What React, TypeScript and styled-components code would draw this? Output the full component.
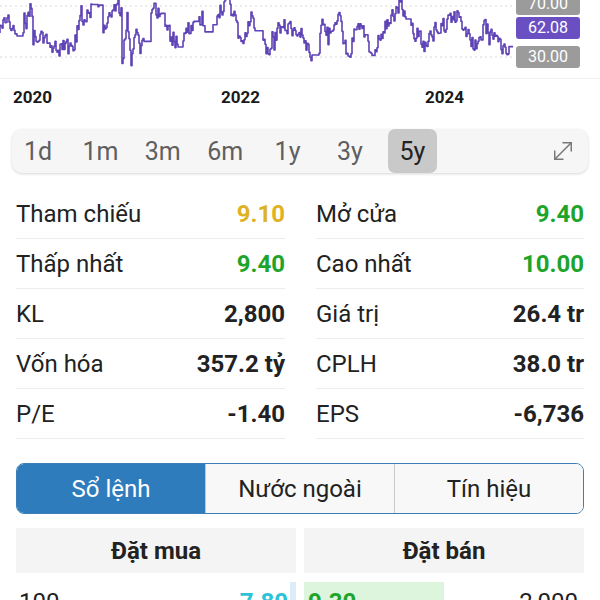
import styled, { createGlobalStyle } from 'styled-components';

const GlobalStyle = createGlobalStyle`
  html, body {
    margin: 0;
    padding: 0;
    background: #fff;
  }
  body {
    font-family: Roboto, "Noto Sans", "Liberation Sans", sans-serif;
    color: #222;
  }
`;

// rough shape of the RSI line, noise is added on top
const KEYS: [number, number][] = [
  [0, 33], [10, 20], [23, 33], [32, 8], [34, 33], [50, 45], [73, 50], [80, 25],
  [92, 10], [100, 2], [101, 45], [107, 22], [117, 7], [122, 7], [123, 66], [128, 15],
  [132, 62], [136, 33], [142, 52], [147, 22], [151, 3], [161, 15], [168, 33], [176, 40],
  [191, 33], [203, 17], [209, 30], [220, 10], [226, 3], [235, 15], [243, 45], [253, 17],
  [268, 52], [283, 25], [302, 33], [318, 62], [323, 22], [333, 33], [341, 17], [348, 60],
  [360, 20], [371, 50], [383, 33], [390, 20], [402, 3], [413, 27], [425, 45], [436, 30],
  [459, 17], [475, 48], [486, 27], [498, 45], [509, 52], [513, 17],
];

const mulberry32 = (seed: number) => () => {
  seed |= 0;
  seed = (seed + 0x6d2b79f5) | 0;
  let t = Math.imul(seed ^ (seed >>> 15), 1 | seed);
  t = (t + Math.imul(t ^ (t >>> 7), 61 | t)) ^ t;
  return ((t ^ (t >>> 14)) >>> 0) / 4294967296;
};

const interp = (x: number) => {
  for (let i = 1; i < KEYS.length; i++) {
    const [x0, y0] = KEYS[i - 1];
    const [x1, y1] = KEYS[i];
    if (x <= x1) return y0 + ((y1 - y0) * (x - x0)) / Math.max(x1 - x0, 0.001);
  }
  return KEYS[KEYS.length - 1][1];
};

const buildLine = () => {
  const rnd = mulberry32(23);
  let prev = 0;
  let hold = 0;
  let y = interp(0);
  const parts: string[] = [`M0 ${y.toFixed(1)}`];
  for (let x = 1; x <= 513; x += 1) {
    if (hold > 0) {
      hold--;
      parts.push(`H${x}`);
      continue;
    }
    let noise = prev * 0.25 + (rnd() - 0.5) * 16;
    if (rnd() < 0.06) noise += (rnd() - 0.5) * 24;
    prev = noise;
    y = Math.min(80, Math.max(-4, interp(x) + noise));
    parts.push(`V${y.toFixed(1)} H${x}`);
    if (rnd() < 0.04) hold = 2 + Math.floor(rnd() * 6);
  }
  return parts.join(' ');
};

const LINE = buildLine();

const RANGES = ['1d', '1m', '3m', '6m', '1y', '3y', '5y'];

type Tone = 'ref' | 'up' | 'plain';

const STATS: { label: string; value: string; tone: Tone }[][] = [
  [
    { label: 'Tham chiếu', value: '9.10', tone: 'ref' },
    { label: 'Thấp nhất', value: '9.40', tone: 'up' },
    { label: 'KL', value: '2,800', tone: 'plain' },
    { label: 'Vốn hóa', value: '357.2 tỷ', tone: 'plain' },
    { label: 'P/E', value: '-1.40', tone: 'plain' },
  ],
  [
    { label: 'Mở cửa', value: '9.40', tone: 'up' },
    { label: 'Cao nhất', value: '10.00', tone: 'up' },
    { label: 'Giá trị', value: '26.4 tr', tone: 'plain' },
    { label: 'CPLH', value: '38.0 tr', tone: 'plain' },
    { label: 'EPS', value: '-6,736', tone: 'plain' },
  ],
];

const TABS = ['Sổ lệnh', 'Nước ngoài', 'Tín hiệu'];

const App = () => {
  return (
    <>
      <GlobalStyle />
      <SPage>
        <SChart>
          <svg width="515" height="78" viewBox="0 0 515 78">
            <line x1="0" y1="6" x2="515" y2="6" stroke="#d9d9d9" strokeDasharray="2 3" />
            <line x1="0" y1="57" x2="515" y2="57" stroke="#d9d9d9" strokeDasharray="2 3" />
            <path d={LINE} fill="none" stroke="#5e43b6" strokeWidth="1.6" strokeLinejoin="round" />
          </svg>
          <SAxisTag $top={-7}>70.00</SAxisTag>
          <SAxisTag $top={17} $current>62.08</SAxisTag>
          <SAxisTag $top={46}>30.00</SAxisTag>
        </SChart>

        <SYears>
          <span>2020</span>
          <span>2022</span>
          <span>2024</span>
        </SYears>

        <SRangeBar>
          {RANGES.map((r) => (
            <SRange key={r} $active={r === '5y'}>
              {r}
            </SRange>
          ))}
          <SExpand>
            <svg width="22" height="22" viewBox="0 0 24 24" fill="none" stroke="#777" strokeWidth="1.6" strokeLinecap="round" strokeLinejoin="round">
              <path d="M12 21H3v-9" />
              <path d="M12 3h9v9" />
              <path d="M21 3 3 21" />
            </svg>
          </SExpand>
        </SRangeBar>

        <SStats>
          {STATS.map((col, i) => (
            <SStatCol key={i}>
              {col.map((s) => (
                <SStatRow key={s.label}>
                  <SStatLabel>{s.label}</SStatLabel>
                  <SStatValue $tone={s.tone}>{s.value}</SStatValue>
                </SStatRow>
              ))}
            </SStatCol>
          ))}
        </SStats>

        <STabs>
          {TABS.map((t, i) => (
            <STab key={t} $active={i === 0}>
              {t}
            </STab>
          ))}
        </STabs>

        <SBook>
          <SBookHead>Đặt mua</SBookHead>
          <SBookHead>Đặt bán</SBookHead>
          <SBookSide>
            <SQty>100</SQty>
            <SPrice $side="buy">7.80</SPrice>
            <SBuyBar />
          </SBookSide>
          <SBookSide>
            <SSellFill style={{ width: '50%' }} />
            <SPrice $side="sell">9.30</SPrice>
            <SQty>2,000</SQty>
          </SBookSide>
        </SBook>
      </SPage>
    </>
  );
};

export default App;

const SPage = styled.div`
  width: 600px;
  height: 600px;
  overflow: hidden;
  background: #fff;
`;

const SChart = styled.div`
  position: relative;
  height: 78px;
  border-bottom: 1px solid #efefef;
  overflow: hidden;

  svg {
    display: block;
  }
`;

const SAxisTag = styled.div<{ $top: number; $current?: boolean }>`
  position: absolute;
  left: 516px;
  top: ${(p) => p.$top}px;
  width: 64px;
  height: 22px;
  border-radius: 3px;
  background: ${(p) => (p.$current ? '#6a4fc2' : '#9b9b9b')};
  color: #fff;
  font-size: 16px;
  line-height: 22px;
  text-align: center;
`;

const SYears = styled.div`
  display: grid;
  grid-template-columns: 208px 204px 1fr;
  padding: 8px 0 0 13px;
  height: 20px;
  font-size: 17px;
  line-height: 20px;
  font-weight: 700;
  color: #1a1a1a;
`;

const SRangeBar = styled.div`
  display: flex;
  align-items: stretch;
  gap: 13.4px;
  margin: 22px 12px 0;
  padding-left: 1.5px;
  height: 44px;
  background: #f6f6f6;
  border-radius: 10px;
  box-shadow: 0 1px 3px rgba(0, 0, 0, 0.16);
`;

const SRange = styled.div<{ $active?: boolean }>`
  display: flex;
  align-items: center;
  justify-content: center;
  width: 49px;
  border-radius: 7px;
  background: ${(p) => (p.$active ? '#c9c9c9' : 'transparent')};
  color: ${(p) => (p.$active ? '#222' : '#5f5f5f')};
  font-size: 25px;
`;

const SExpand = styled.div`
  display: flex;
  align-items: center;
  margin-left: auto;
  margin-right: 14px;
`;

const SStats = styled.div`
  display: grid;
  grid-template-columns: 269px 268px;
  column-gap: 31px;
  padding: 16px 16px 0;
`;

const SStatCol = styled.div`
  display: flex;
  flex-direction: column;
`;

const SStatRow = styled.div`
  display: flex;
  align-items: center;
  justify-content: space-between;
  height: 49px;
  border-bottom: 1px solid #ececec;
  font-size: 24px;
`;

const SStatLabel = styled.span`
  color: #222;
`;

const SStatValue = styled.span<{ $tone: Tone }>`
  font-weight: 700;
  color: ${(p) => (p.$tone === 'ref' ? '#dfb224' : p.$tone === 'up' ? '#1ea42b' : '#222')};
`;

const STabs = styled.div`
  display: flex;
  margin: 24px 16px 0;
  height: 49px;
  border: 1.5px solid #3b7fb6;
  border-radius: 8px;
  overflow: hidden;
`;

const STab = styled.div<{ $active?: boolean }>`
  flex: 1;
  display: flex;
  align-items: center;
  justify-content: center;
  font-size: 24px;
  background: ${(p) => (p.$active ? '#2f7cbc' : '#f8f8f8')};
  color: ${(p) => (p.$active ? '#fff' : '#222')};

  & + & {
    border-left: 1px solid #c9c9c9;
  }
`;

const SBook = styled.div`
  display: grid;
  grid-template-columns: 280px 280px;
  column-gap: 8px;
  row-gap: 9px;
  padding: 14px 16px 0;
`;

const SBookHead = styled.div`
  display: flex;
  align-items: center;
  justify-content: center;
  height: 45px;
  background: #f4f4f4;
  font-size: 24px;
  font-weight: 700;
  color: #222;
`;

const SBookSide = styled.div`
  position: relative;
  display: flex;
  align-items: center;
  justify-content: space-between;
  height: 40px;
  font-size: 24px;
`;

const SQty = styled.span`
  position: relative;
  padding: 0 6px 0 3px;
  color: #222;
`;

const SPrice = styled.span<{ $side: 'buy' | 'sell' }>`
  position: relative;
  font-weight: 700;
  padding: ${(p) => (p.$side === 'buy' ? '0 8px 0 0' : '0 0 0 4px')};
  color: ${(p) => (p.$side === 'buy' ? '#2cc3d6' : '#1ea42b')};
`;

const SBuyBar = styled.div`
  position: absolute;
  right: 0;
  top: 0;
  bottom: 0;
  width: 6px;
  background: #dcecf8;
`;

const SSellFill = styled.div`
  position: absolute;
  left: 0;
  top: 0;
  bottom: 0;
  background: #ddf4dd;
`;
